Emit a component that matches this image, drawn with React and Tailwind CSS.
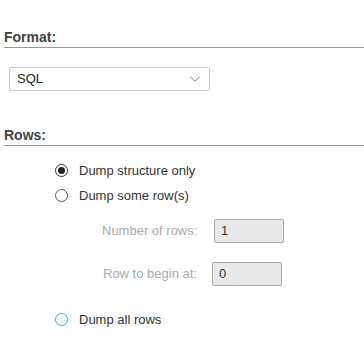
export default function App() {
    return (
        <div className="w-[364px] h-[352px] bg-white font-['Liberation_Sans',Arial,sans-serif] text-[13px] text-[#333] pt-[29px] overflow-hidden">
            <h3 className="ml-1 pb-[2px] font-bold text-[14px] text-[#444] border-b border-[#999] leading-[16px]">Format:</h3>
            <div className="mt-[19px] ml-[9px] w-[201px] h-[24px] border border-[#ccc] rounded-[2px] flex items-center justify-between pl-[7px] pr-[7px] text-[13px] text-[#222]">
                <span>SQL</span>
                <svg width="12" height="8" viewBox="0 0 12 8" className="mr-[1px]">
                    <path d="M1 1.5 L6 6 L11 1.5" fill="none" stroke="#888" strokeWidth="1" />
                </svg>
            </div>
            <h3 className="mt-[36px] ml-1 pb-[2px] font-bold text-[14px] text-[#444] border-b border-[#999] leading-[16px]">Rows:</h3>
            <div className="ml-[55px] mt-[12px] flex flex-col">
                <label className="flex items-center h-[25px]">
                    <span className="w-[13px] h-[13px] rounded-full border border-[#333] flex items-center justify-center">
                        <span className="w-[7px] h-[7px] rounded-full bg-[#222]"></span>
                    </span>
                    <span className="ml-[11px] text-[#333]">Dump structure only</span>
                </label>
                <label className="flex items-center h-[25px]">
                    <span className="w-[13px] h-[13px] rounded-full border border-[#555]"></span>
                    <span className="ml-[11px] text-[#333]">Dump some row(s)</span>
                </label>
                <div className="flex items-center mt-[11px] ml-[47px]">
                    <span className="w-[97px] text-[#aaa]">Number of rows:</span>
                    <div className="ml-[15px] w-[70px] h-[24px] border border-[#aaa] rounded-[2px] bg-[#e9e9e9] flex items-center pl-[6px] text-[#333]">1</div>
                </div>
                <div className="flex items-center mt-[19px] ml-[48px]">
                    <span className="w-[94px] text-[#aaa]">Row to begin at:</span>
                    <div className="ml-[15px] w-[70px] h-[24px] border border-[#aaa] rounded-[2px] bg-[#e9e9e9] flex items-center pl-[6px] text-[#333]">0</div>
                </div>
                <label className="flex items-center h-[25px] mt-[21px]">
                    <span className="w-[13px] h-[13px] rounded-full border-[1.5px] border-[#3ea1e0]"></span>
                    <span className="ml-[11px] text-[#333]">Dump all rows</span>
                </label>
            </div>
        </div>
    );
}
